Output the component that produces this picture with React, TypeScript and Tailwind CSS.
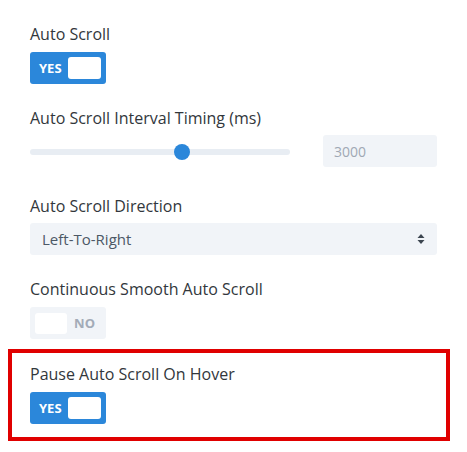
import React, { useState } from 'react';

const font = { fontFamily: '"Open Sans", "Liberation Sans", sans-serif' };

const Toggle: React.FC<{ on: boolean; onChange: (v: boolean) => void }> = ({ on, onChange }) => {
  if (on) {
    return (
      <button
        onClick={() => onChange(false)}
        className="flex items-center w-[76px] h-[32px] rounded-[3px] bg-[#2b87da] pl-[9px] pr-[5px] justify-between"
      >
        <span className="text-white text-[13px] font-bold leading-none">YES</span>
        <span className="w-[33px] h-[22px] rounded-[3px] bg-white" />
      </button>
    );
  }
  return (
    <button
      onClick={() => onChange(true)}
      className="flex items-center w-[76px] h-[32px] rounded-[3px] bg-[#f1f4f8] pl-[5px] pr-[11px] justify-between"
    >
      <span className="w-[32px] h-[21px] rounded-[3px] bg-white" />
      <span className="text-[#a3abb7] text-[13px] font-bold leading-none">NO</span>
    </button>
  );
};

const Label: React.FC<{ children: React.ReactNode }> = ({ children }) => (
  <div className="text-[16px] leading-[20px] text-[#32373c] font-medium mb-[8px]">{children}</div>
);

export default function App() {
  const [autoScroll, setAutoScroll] = useState(true);
  const [smooth, setSmooth] = useState(false);
  const [pause, setPause] = useState(true);
  const [timing, setTiming] = useState(3000);

  // slider position for 3000ms
  const pct = 58.5;

  return (
    <div style={font} className="w-[467px] h-[452px] bg-white pt-[24px] overflow-hidden">
      <div className="pl-[30px] w-[437px]">
        <Label>Auto Scroll</Label>
        <Toggle on={autoScroll} onChange={setAutoScroll} />

        <div className="mt-[24px]">
          <Label>Auto Scroll Interval Timing (ms)</Label>
          <div className="flex items-center gap-[33px] mt-[-1px]">
            <div className="relative w-[260px] h-[6px] rounded-full bg-[#e8edf3] mt-[2px]">
              <div
                className="absolute top-1/2 w-[16px] h-[16px] -ml-[8px] -mt-[8px] rounded-full bg-[#2b87da]"
                style={{ left: `${pct}%` }}
              />
            </div>
            <input
              value={timing}
              onChange={(e) => setTiming(Number(e.target.value) || 0)}
              className="w-[114px] h-[32px] rounded-[3px] bg-[#f1f4f8] px-[11px] text-[14px] text-[#a0a8b4] outline-none"
            />
          </div>
        </div>

        <div className="mt-[29px]">
          <Label>Auto Scroll Direction</Label>
          <div className="flex items-center justify-between h-[32px] rounded-[3px] bg-[#f1f4f8] pl-[12px] pr-[12px] mt-[-1px]">
            <span className="text-[15px] text-[#4c5866]">Left-To-Right</span>
            <svg width="8" height="12" viewBox="0 0 8 12">
              <path d="M4 1 L7.5 5 L0.5 5 Z" fill="#3c4550" />
              <path d="M4 11 L7.5 7 L0.5 7 Z" fill="#3c4550" />
            </svg>
          </div>
        </div>

        <div className="mt-[24px]">
          <Label>Continuous Smooth Auto Scroll</Label>
          <Toggle on={smooth} onChange={setSmooth} />
        </div>
      </div>

      <div className="mt-[10px] ml-[8px] w-[442px] border-4 border-[#e00000] pl-[18px] pt-[11px] pb-[13px]">
        <Label>Pause Auto Scroll On Hover</Label>
        <Toggle on={pause} onChange={setPause} />
      </div>
    </div>
  );
}
